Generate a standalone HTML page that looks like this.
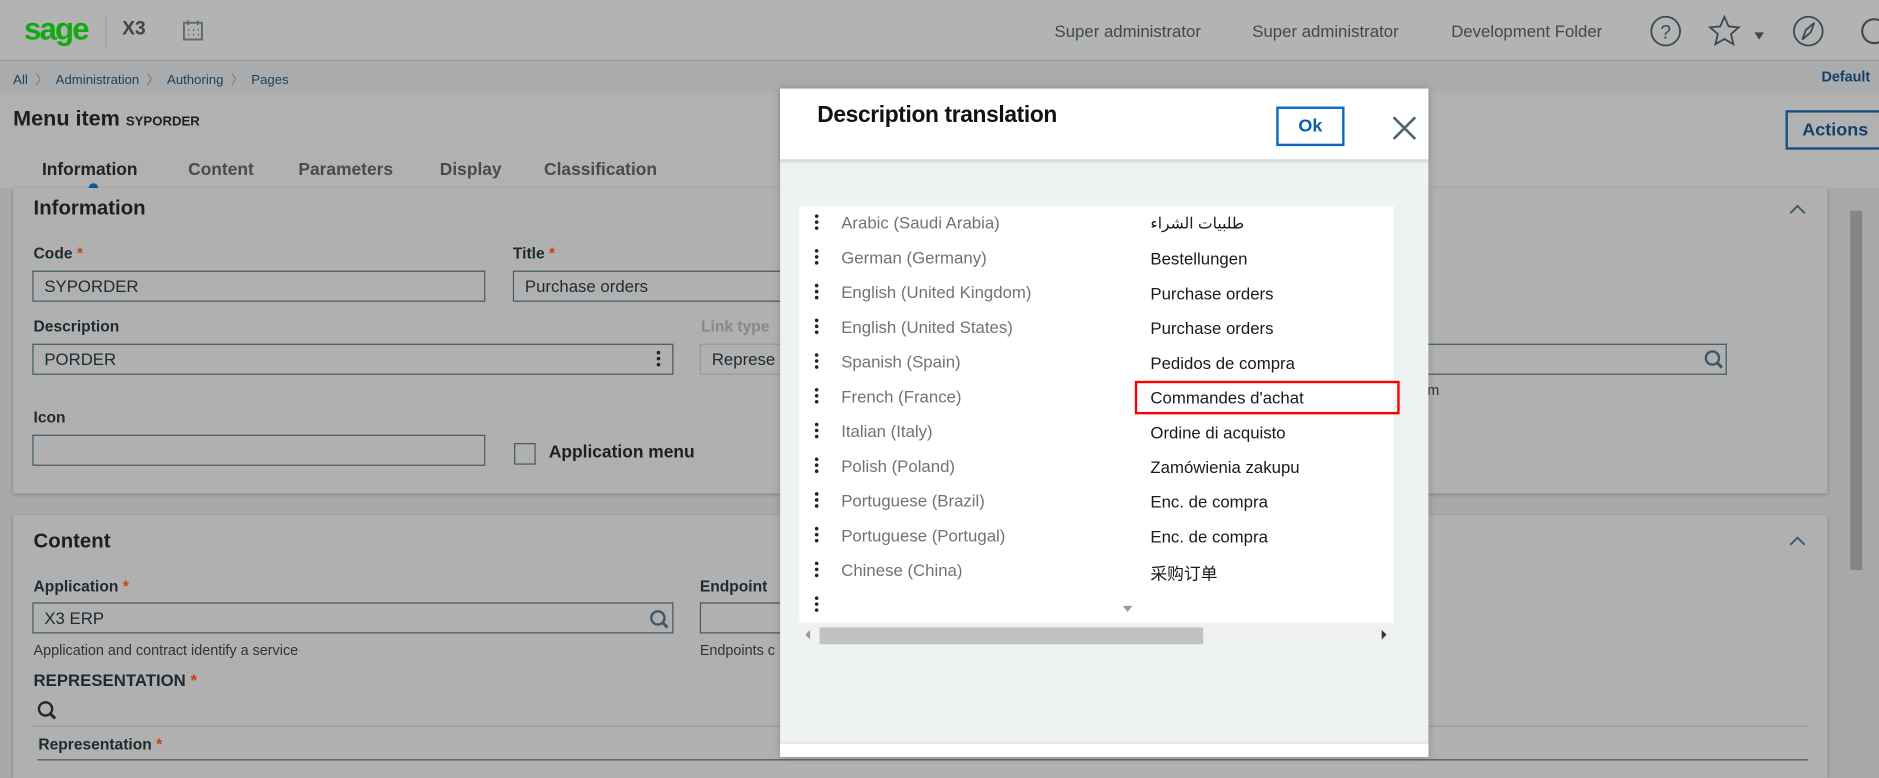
<!DOCTYPE html>
<html><head><meta charset="utf-8"><style>
*{box-sizing:border-box;margin:0;padding:0}
html,body{width:1879px;height:764px;overflow:hidden;background:#a7a9ab}
#w{position:absolute;left:0;top:0;width:1568px;height:638px;transform:scale(1.19834,1.1975);transform-origin:0 0;font-family:"Liberation Sans","Noto Sans CJK SC",sans-serif;color:#1e1e1e}
.a{position:absolute}
.hdr{left:0;top:0;width:1568px;height:51px;background:#b3b3b3;border-bottom:1px solid #9a9a9a}
.bc{left:0;top:52px;width:1568px;height:25px;background:#a9abad;font-size:11px;color:#1f3f5c}
.pg{left:0;top:77px;width:1568px;height:80px;background:#b1b1b1}
.card{background:#b0b0b0;box-shadow:0 1px 3px rgba(0,0,0,.25)}
.lbl{font-size:13px;font-weight:bold;color:#1e2a30}
.inp{border:1px solid #3f5866;height:26px;font-size:14px;padding:4px 9px;color:#1e2a30}
.st{color:#c6420e}
.dots{position:absolute;width:3px}
.dots i{display:block;width:3px;height:3px;background:#222;border-radius:50%;margin-bottom:2px}
.row{position:absolute;left:0;width:496px;height:29px;font-size:14px}
.row .l{position:absolute;left:35px;top:6px;color:#6d7478}
.row .r{position:absolute;left:293px;top:7px;color:#1a1a1a}
</style></head><body><div id="w">
<div class="a hdr">
 <div class="a" style="left:20px;top:9px;font-size:26px;font-weight:bold;color:#14a814;letter-spacing:-1.5px">sage</div>
 <div class="a" style="left:88px;top:12px;width:1px;height:28px;background:#a0a0a0"></div>
 <div class="a" style="left:102px;top:16px;font-size:16px;font-weight:bold;color:#444">X3</div>
 <svg class="a" style="left:152px;top:16px" width="18" height="18" viewBox="0 0 18 18"><rect x="1.5" y="3" width="15" height="14" fill="none" stroke="#5d6a72" stroke-width="1.6"/><path d="M5 1v4M13 1v4M5 9h1M9 9h1M13 9h1M5 13h1M9 13h1M13 13h1" stroke="#5d6a72" stroke-width="1.6"/></svg>
 <div class="a" style="left:880px;top:18px;font-size:14px;color:#3b4a52">Super administrator</div>
 <div class="a" style="left:1045px;top:18px;font-size:14px;color:#3b4a52">Super administrator</div>
 <div class="a" style="left:1211px;top:18px;font-size:14px;color:#3b4a52">Development Folder</div>
 <svg class="a" style="left:1376px;top:12px" width="28" height="28"><circle cx="14" cy="14" r="12" fill="none" stroke="#3b4a52" stroke-width="1.5"/><text x="14" y="20" font-size="16" text-anchor="middle" fill="#3b4a52" font-family="Liberation Sans">?</text></svg>
 <svg class="a" style="left:1425px;top:12px" width="28" height="28"><path d="M14 2l3.5 8 8.5.8-6.5 5.7 2 8.5L14 20.5 6.5 25l2-8.5L2 10.8l8.5-.8z" fill="none" stroke="#3b4a52" stroke-width="1.5"/></svg>
 <div class="a" style="left:1464px;top:27px;border:4px solid transparent;border-top:6px solid #3b4a52"></div>
 <svg class="a" style="left:1495px;top:12px" width="28" height="28"><circle cx="14" cy="14" r="12" fill="none" stroke="#3b4a52" stroke-width="1.5"/><path d="M19 7l-7 6-3 8 7-6z" fill="none" stroke="#3b4a52" stroke-width="1.5"/></svg>
 <svg class="a" style="left:1550px;top:12px" width="18" height="28"><circle cx="14" cy="14" r="10" fill="none" stroke="#3b4a52" stroke-width="1.8"/></svg>
</div>
<div class="a bc"><span class="a" style="left:11px;top:6px">All &nbsp;<span style="color:#777">〉</span>&nbsp; Administration &nbsp;<span style="color:#777">〉</span>&nbsp; Authoring &nbsp;<span style="color:#777">〉</span>&nbsp; Pages</span><b class="a" style="left:1520px;top:5px;font-size:12px;color:#15406a">Default</b></div>
<div class="a pg">
 <div class="a" style="left:11px;top:12px;font-size:18px;font-weight:bold">Menu item <span style="font-size:11px">SYPORDER</span></div>
 <div class="a" style="left:1490px;top:15px;width:80px;height:33px;border:2px solid #1a4f80;font-size:15px;font-weight:bold;color:#15406a;padding:6px 12px">Actions</div>
 <div class="a" style="left:35px;top:57px;font-size:14.5px;font-weight:bold;color:#222">Information</div>
 <div class="a" style="left:74px;top:76px;width:8px;height:8px;border-radius:50%;background:#0c5a9a"></div>
 <div class="a" style="left:157px;top:57px;font-size:14.5px;font-weight:bold;color:#4a4a4a">Content</div>
 <div class="a" style="left:249px;top:57px;font-size:14.5px;font-weight:bold;color:#4a4a4a">Parameters</div>
 <div class="a" style="left:367px;top:57px;font-size:14.5px;font-weight:bold;color:#4a4a4a">Display</div>
 <div class="a" style="left:454px;top:57px;font-size:14.5px;font-weight:bold;color:#4a4a4a">Classification</div>
</div>
<div class="a" style="left:1542px;top:157px;width:14px;height:481px;background:#a8a8a8"></div>
<div class="a" style="left:1544px;top:176px;width:10px;height:300px;background:#868686"></div>
<div class="a card" style="left:11px;top:157px;width:1514px;height:255px">
 <div class="a" style="left:17px;top:7px;font-size:17px;font-weight:bold">Information</div>
 <svg class="a" style="left:1481px;top:13px" width="16" height="10"><path d="M2 8l6-6 6 6" fill="none" stroke="#3f5866" stroke-width="1.6"/></svg>
 <div class="a lbl" style="left:17px;top:47px">Code <span class="st">*</span></div>
 <div class="a inp" style="left:16px;top:69px;width:378px">SYPORDER</div>
 <div class="a lbl" style="left:417px;top:47px">Title <span class="st">*</span></div>
 <div class="a inp" style="left:417px;top:69px;width:300px">Purchase orders</div>
 <div class="a lbl" style="left:17px;top:108px">Description</div>
 <div class="a inp" style="left:16px;top:130px;width:535px">PORDER</div>
 <div class="dots" style="left:537px;top:136px"><i></i><i></i><i></i></div>
 <div class="a lbl" style="left:574px;top:108px;color:#888">Link type</div>
 <div class="a inp" style="left:573px;top:130px;width:100px;border-color:#999">Represe</div>
 <div class="a inp" style="left:1170px;top:130px;width:260px;border-left:0"></div>
 <svg class="a" style="left:1410px;top:134px" width="18" height="18"><circle cx="8" cy="8" r="5.5" fill="none" stroke="#3f5866" stroke-width="2"/><path d="M12 12l4 4" stroke="#3f5866" stroke-width="2.5"/></svg>
 <div class="a" style="left:1180px;top:162px;font-size:12px;color:#333">m</div>
 <div class="a lbl" style="left:17px;top:184px">Icon</div>
 <div class="a inp" style="left:16px;top:206px;width:378px"></div>
 <div class="a" style="left:418px;top:213px;width:18px;height:18px;border:1px solid #3f5866"></div>
 <div class="a" style="left:447px;top:213px;font-size:14.5px;font-weight:bold">Application menu</div>
</div>
<div class="a card" style="left:11px;top:430px;width:1514px;height:220px">
 <div class="a" style="left:17px;top:12px;font-size:17px;font-weight:bold">Content</div>
 <svg class="a" style="left:1481px;top:17px" width="16" height="10"><path d="M2 8l6-6 6 6" fill="none" stroke="#3f5866" stroke-width="1.6"/></svg>
 <div class="a lbl" style="left:17px;top:52px">Application <span class="st">*</span></div>
 <div class="a inp" style="left:16px;top:73px;width:535px">X3 ERP</div>
 <svg class="a" style="left:530px;top:78px" width="18" height="18"><circle cx="8" cy="8" r="5.5" fill="none" stroke="#3f5866" stroke-width="2"/><path d="M12 12l4 4" stroke="#3f5866" stroke-width="2.5"/></svg>
 <div class="a" style="left:17px;top:106px;font-size:12px;color:#333">Application and contract identify a service</div>
 <div class="a lbl" style="left:573px;top:52px">Endpoint</div>
 <div class="a inp" style="left:573px;top:73px;width:100px"></div>
 <div class="a" style="left:573px;top:106px;font-size:12px;color:#333">Endpoints c</div>
 <div class="a lbl" style="left:17px;top:130px;font-size:14px">REPRESENTATION <span class="st">*</span></div>
 <svg class="a" style="left:19px;top:154px" width="18" height="18"><circle cx="8" cy="8" r="5.5" fill="none" stroke="#1e2a30" stroke-width="2"/><path d="M12 12l4 4" stroke="#1e2a30" stroke-width="2.5"/></svg>
 <div class="a" style="left:16px;top:176px;width:1482px;height:1px;background:#999"></div>
 <div class="a lbl" style="left:21px;top:184px">Representation <span class="st">*</span></div>
 <div class="a" style="left:20px;top:204px;width:1478px;height:1px;background:#3f5866"></div>
</div>
<!-- modal -->
<div class="a" style="left:651px;top:74px;width:541px;height:558px;background:#eff2f3;box-shadow:0 0 6px rgba(0,0,0,.2)">
 <div class="a" style="left:0;top:0;width:541px;height:59px;background:#fff;box-shadow:0 2px 3px rgba(0,0,0,.15)">
  <div class="a" style="left:31px;top:12px;font-size:19px;font-weight:bold;color:#111;letter-spacing:-0.3px">Description translation</div>
  <div class="a" style="left:414px;top:15px;width:57px;height:33px;border:2px solid #0a6bbd;font-size:15px;font-weight:bold;color:#0a5fa8;text-align:center;padding-top:6px">Ok</div>
  <svg class="a" style="left:510px;top:22px" width="22" height="22"><path d="M2 2l18 18M20 2L2 20" stroke="#4e6571" stroke-width="2.2"/></svg>
 </div>
 <div class="a" style="left:16px;top:98px;width:496px;height:348px;background:#fff">
  <div class="row" style="top:0"><div class="dots" style="left:13px;top:7px"><i></i><i></i><i></i></div><span class="l">Arabic (Saudi Arabia)</span><span class="r" style="font-size:13px">طلبيات الشراء</span></div>
  <div class="row" style="top:29px"><div class="dots" style="left:13px;top:7px"><i></i><i></i><i></i></div><span class="l">German (Germany)</span><span class="r">Bestellungen</span></div>
  <div class="row" style="top:58px"><div class="dots" style="left:13px;top:7px"><i></i><i></i><i></i></div><span class="l">English (United Kingdom)</span><span class="r">Purchase orders</span></div>
  <div class="row" style="top:87px"><div class="dots" style="left:13px;top:7px"><i></i><i></i><i></i></div><span class="l">English (United States)</span><span class="r">Purchase orders</span></div>
  <div class="row" style="top:116px"><div class="dots" style="left:13px;top:7px"><i></i><i></i><i></i></div><span class="l">Spanish (Spain)</span><span class="r">Pedidos de compra</span></div>
  <div class="row" style="top:145px"><div class="dots" style="left:13px;top:7px"><i></i><i></i><i></i></div><span class="l">French (France)</span><span class="r">Commandes d'achat</span></div>
  <div class="row" style="top:174px"><div class="dots" style="left:13px;top:7px"><i></i><i></i><i></i></div><span class="l">Italian (Italy)</span><span class="r">Ordine di acquisto</span></div>
  <div class="row" style="top:203px"><div class="dots" style="left:13px;top:7px"><i></i><i></i><i></i></div><span class="l">Polish (Poland)</span><span class="r">Zamówienia zakupu</span></div>
  <div class="row" style="top:232px"><div class="dots" style="left:13px;top:7px"><i></i><i></i><i></i></div><span class="l">Portuguese (Brazil)</span><span class="r">Enc. de compra</span></div>
  <div class="row" style="top:261px"><div class="dots" style="left:13px;top:7px"><i></i><i></i><i></i></div><span class="l">Portuguese (Portugal)</span><span class="r">Enc. de compra</span></div>
  <div class="row" style="top:290px"><div class="dots" style="left:13px;top:7px"><i></i><i></i><i></i></div><span class="l">Chinese (China)</span><span class="r">采购订单</span></div>
  <div class="row" style="top:319px"><div class="dots" style="left:13px;top:7px"><i></i><i></i><i></i></div></div>
  <div class="a" style="left:270px;top:334px;border:4px solid transparent;border-top:5px solid #999"></div>
  <div class="a" style="left:280px;top:146px;width:221px;height:28px;border:2.5px solid #f00"></div>
 </div>
 <div class="a" style="left:16px;top:447px;width:496px;height:18px;background:#f0f0f0"></div>
 <div class="a" style="left:33px;top:450px;width:320px;height:14px;background:#c1c1c1"></div>
 <div class="a" style="left:21px;top:452px;border:4px solid transparent;border-right:4px solid #999;border-left:0"></div>
 <div class="a" style="left:502px;top:452px;border:4px solid transparent;border-left:4px solid #333;border-right:0"></div>
 <div class="a" style="left:0;top:546px;width:541px;height:12px;background:#fff;border-top:1px solid #ddd"></div>
</div>
</div></body></html>
